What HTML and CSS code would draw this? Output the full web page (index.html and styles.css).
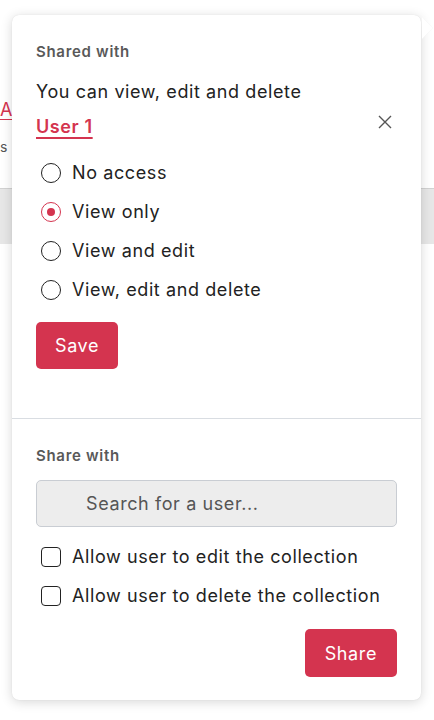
FILE: index.html
```html
<!DOCTYPE html>
<html lang="en">
<head>
<meta charset="utf-8">
<title>Share collection</title>
<link rel="stylesheet" href="styles.css">
</head>
<body>
<div class="page">
  <div class="bg-item">
    <a class="bg-link" href="#">Al</a>
    <p class="bg-meta">s</p>
  </div>
  <div class="bg-band"></div>

  <div class="popover" role="dialog" aria-label="Share collection">
    <section class="section section-top">
      <h3 class="label">Shared with</h3>
      <p class="own">You can view, edit and delete</p>
      <div class="user-row">
        <a class="user-link" href="#">User 1</a>
        <button class="close" aria-label="Remove">
          <svg width="14" height="14" viewBox="0 0 14 14"><path d="M1 1 L13 13 M13 1 L1 13" stroke="#555" stroke-width="1.4" fill="none"/></svg>
        </button>
      </div>
      <div class="options">
        <label class="opt"><span class="radio"></span><span>No access</span></label>
        <label class="opt"><span class="radio checked"></span><span>View only</span></label>
        <label class="opt"><span class="radio"></span><span>View and edit</span></label>
        <label class="opt"><span class="radio"></span><span>View, edit and delete</span></label>
      </div>
      <button class="btn">Save</button>
    </section>
    <section class="section section-bottom">
      <h3 class="label">Share with</h3>
      <div class="search">Search for a user...</div>
      <div class="checks">
        <label class="opt"><span class="check"></span><span>Allow user to edit the collection</span></label>
        <label class="opt"><span class="check"></span><span>Allow user to delete the collection</span></label>
      </div>
      <div class="actions"><button class="btn btn-share">Share</button></div>
    </section>
  </div>
</div>
</body>
</html>
```
FILE: styles.css
```css
* { box-sizing: border-box; }
html, body { margin: 0; padding: 0; background: #fff; }
body { font-family: Inter, Lato, sans-serif; color: #222; letter-spacing: 0.6px; }
.page { position: relative; width: 434px; height: 720px; overflow: hidden; }

.bg-item { padding: 98px 0 0 0; }
.bg-link { display: block; font-size: 18px; line-height: 24px; color: #d4344f; text-decoration: underline; text-underline-offset: 3px; }
.bg-meta { margin: 15px 0 0; font-size: 14px; line-height: 20px; color: #555; }
.bg-band { margin-top: 31px; height: 56px; background: #e7e7e7; border-top: 1px solid #d2d2d2; }

.popover {
  position: absolute; left: 12px; top: 15px; width: 409px; height: 685px;
  background: #fff; border-radius: 7px;
  box-shadow: 0 2px 12px rgba(0,0,0,0.16), 0 0 1px rgba(0,0,0,0.12);
}
.popover::after {
  content: ""; position: absolute; right: -9px; top: 5px;
  width: 16px; height: 16px; background: #fff; transform: rotate(45deg);
  box-shadow: 3px -3px 5px rgba(0,0,0,0.06);
  clip-path: polygon(0 0, 100% 0, 100% 100%);
}

.section { padding: 0 24px; }
.section-top { padding-top: 27px; padding-bottom: 49px; }
.section-bottom { border-top: 1px solid #d9dde2; padding-top: 27px; }

.label { margin: 0; font-size: 15px; line-height: 20px; font-weight: 600; color: #595959; letter-spacing: 0.7px; }
.own { margin: 18px 0 0; font-size: 18px; line-height: 24px; color: #222; }
.user-row { margin-top: 11px; display: flex; justify-content: space-between; align-items: flex-start; }
.user-link { font-size: 18px; line-height: 24px; font-weight: 600; color: #d4344f; text-decoration: underline; text-decoration-thickness: 1.5px; text-underline-offset: 4px; }
.close { width: 24px; height: 24px; padding: 0; border: 0; background: none; display: flex; align-items: center; justify-content: center; margin-top: -5px; margin-bottom: -5px; }

.options { margin-top: 22px; display: flex; flex-direction: column; gap: 15px; }
.opt { display: flex; align-items: center; gap: 11px; padding-left: 5px; font-size: 18px; line-height: 24px; color: #222; }
.radio { width: 20px; height: 20px; border-radius: 50%; border: 1.5px solid #222; display: flex; align-items: center; justify-content: center; flex: none; }
.radio.checked { border-color: #d4344f; }
.radio.checked::after { content: ""; width: 8px; height: 8px; border-radius: 50%; background: #d4344f; }

.btn { margin-top: 20px; height: 47px; padding: 0 19px; border: 0; border-radius: 5px; background: #d4344f; color: #fff; font-family: inherit; font-size: 18px; letter-spacing: 0.6px; }

.search { margin-top: 14px; height: 47px; border: 1px solid #c9cdd3; border-radius: 5px; background: #ededed; padding-left: 49px; display: flex; align-items: center; font-size: 18px; color: #555; }
.checks { margin-top: 18px; display: flex; flex-direction: column; gap: 15px; }
.check { width: 20px; height: 20px; border-radius: 4px; border: 1.5px solid #222; flex: none; }
.actions { display: flex; justify-content: flex-end; }
.btn-share { margin-top: 21px; height: 48px; padding: 0 20px; }
```
